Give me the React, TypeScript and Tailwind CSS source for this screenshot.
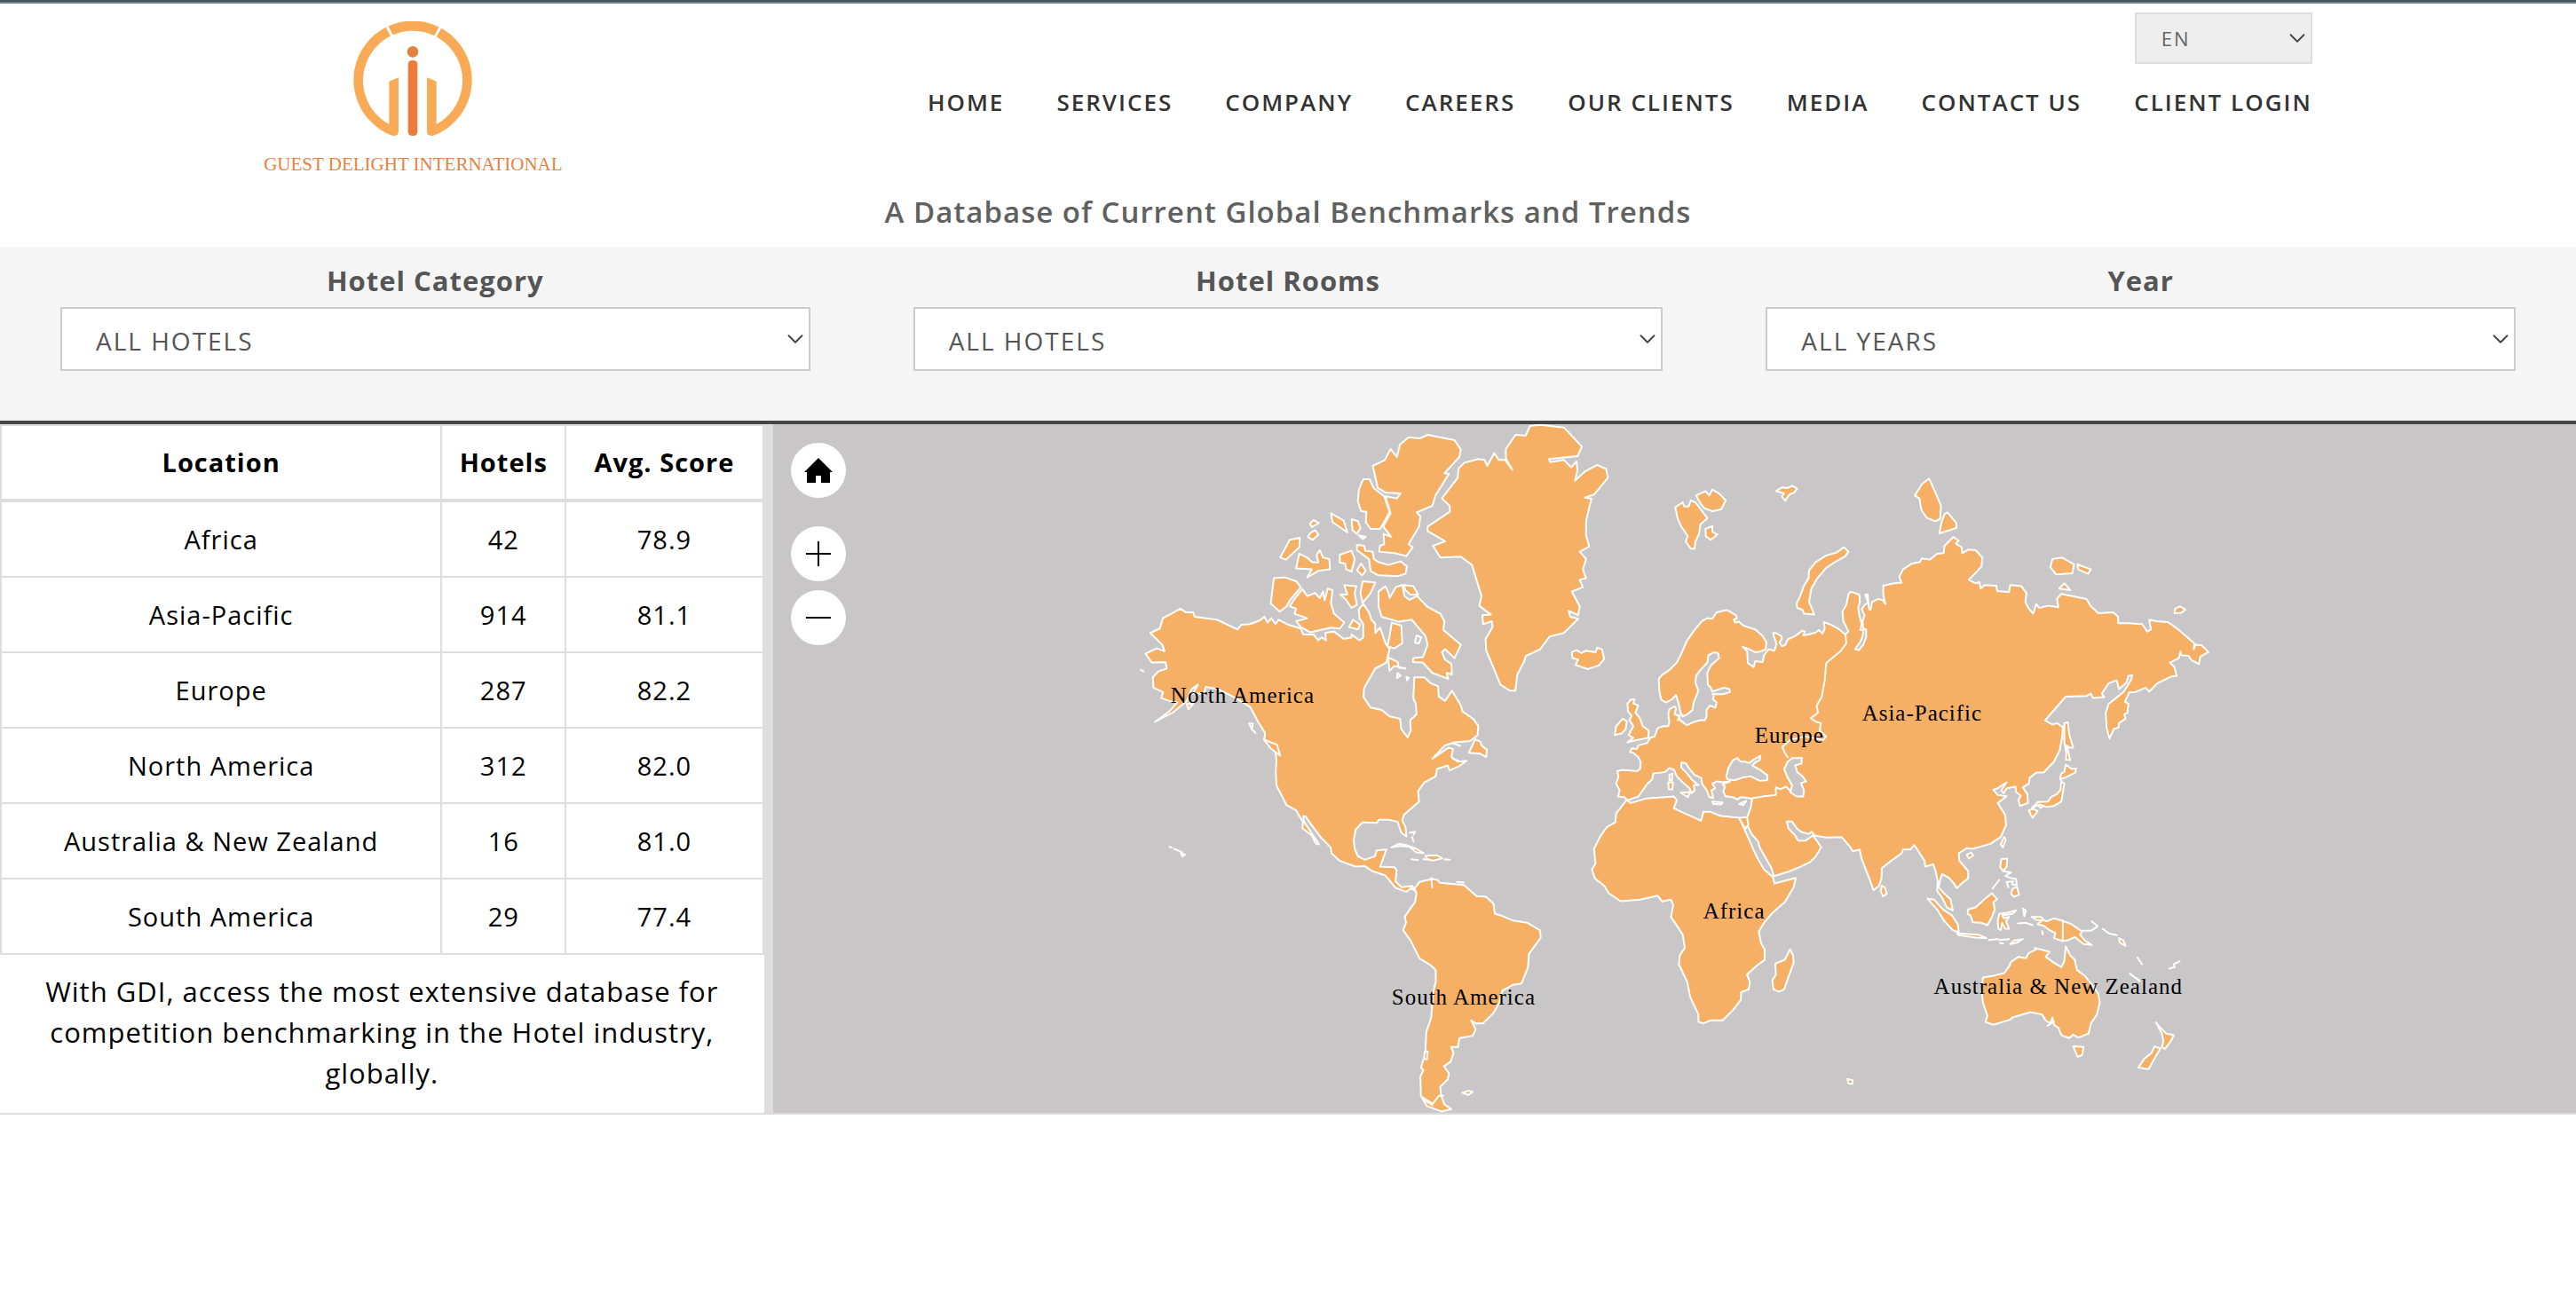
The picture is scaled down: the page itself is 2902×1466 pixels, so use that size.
import { ChevronDown } from "lucide-react";

const NAV = [
  "Home",
  "Services",
  "Company",
  "Careers",
  "Our Clients",
  "Media",
  "Contact Us",
  "Client Login",
];

const FILTERS = [
  { id: "category", label: "Hotel Category", value: "ALL HOTELS" },
  { id: "rooms", label: "Hotel Rooms", value: "ALL HOTELS" },
  { id: "year", label: "Year", value: "ALL YEARS" },
];

const ROWS = [
  { location: "Africa", hotels: "42", score: "78.9" },
  { location: "Asia-Pacific", hotels: "914", score: "81.1" },
  { location: "Europe", hotels: "287", score: "82.2" },
  { location: "North America", hotels: "312", score: "82.0" },
  { location: "Australia & New Zealand", hotels: "16", score: "81.0" },
  { location: "South America", hotels: "29", score: "77.4" },
];

const LABELS = [
  { text: "North America", x: 448, y: 314 },
  { text: "Europe", x: 1106, y: 359 },
  { text: "Asia-Pacific", x: 1227, y: 334 },
  { text: "Africa", x: 1048, y: 557 },
  { text: "South America", x: 697, y: 654 },
  { text: "Australia & New Zealand", x: 1308, y: 642 },
];

// Each region is drawn in its own units and placed on the map by `place`.
const REGIONS = [
  {
    name: "north-america",
    place: "translate(400 -8) scale(0.35714 0.33333)",
    land: [
      "M165 648 182 660 205 660 210 675 280 685 345 718 358 702 385 700 415 688 430 675 440 695 452 680 465 700 475 685 505 702 545 715 552 735 585 735 600 755 610 745 625 755 622 730 650 725 680 750 705 745 705 735 730 755 742 745 742 700 730 680 728 650 742 632 760 660 768 685 780 700 780 730 795 712 812 765 825 785 815 830 780 850 745 915 742 945 765 982 800 990 825 1012 858 1020 862 1055 882 1083 892 1060 890 1025 910 1005 908 970 900 950 903 880 935 880 955 900 978 910 980 945 1000 960 1022 925 1050 975 1055 995 1090 1022 1105 1045 1103 1075 1080 1095 1030 1100 1000 1110 960 1155 1010 1118 1025 1122 1020 1150 1040 1165 1068 1162 1045 1180 1015 1195 1008 1178 975 1190 970 1215 935 1235 915 1265 918 1300 870 1345 865 1365 875 1385 878 1418 862 1405 850 1368 825 1362 790 1362 785 1372 740 1370 718 1395 712 1430 715 1460 725 1485 747 1497 779 1485 784 1465 815 1462 804 1495 795 1520 840 1522 847 1532 844 1570 863 1590 896 1585 905 1598 891 1595 877 1605 844 1592 812 1550 770 1535 747 1518 718 1520 667 1500 642 1475 639 1455 607 1420 569 1365 560 1350 552 1350 555 1368 575 1400 603 1445 592 1442 580 1415 550 1390 552 1370 530 1330 500 1312 468 1245 466 1200 468 1160 465 1135 430 1090 432 1068 410 1030 385 980 340 950 285 920 245 912 240 935 205 935 220 905 200 920 185 960 140 1000 85 1030 130 995 155 965 130 960 105 950 110 930 80 915 78 880 95 860 122 850 118 828 75 830 55 800 90 782 115 792 108 770 70 730 100 715 110 680Z",
      "M945 60 1030 78 1050 110 1045 135 998 190 1012 192 970 265 960 300 910 322 922 335 918 370 885 430 898 440 878 470 842 460 792 455 795 435 808 430 806 395 830 405 805 370 828 325 812 268 848 275 860 258 812 255 788 240 772 165 810 145 828 108 848 135 858 92 885 68 920 72Z",
      "M742 210 762 210 775 240 808 268 825 320 810 350 795 378 765 378 750 355 752 320 735 318 725 285 728 245Z",
      "M1042 175 1060 155 1105 142 1125 145 1133 165 1155 122 1170 145 1190 145 1212 178 1192 140 1192 108 1222 60 1255 62 1268 30 1300 26 1375 35 1432 100 1418 132 1328 142 1332 152 1375 145 1398 170 1415 150 1418 180 1410 215 1440 185 1480 162 1508 175 1514 205 1470 262 1442 272 1462 275 1445 350 1445 400 1455 438 1425 455 1445 480 1435 515 1445 545 1425 550 1435 575 1400 590 1425 640 1420 670 1390 655 1395 675 1420 682 1375 730 1330 742 1300 785 1255 808 1248 830 1228 870 1222 925 1205 925 1175 905 1150 840 1130 790 1128 750 1150 710 1148 690 1120 700 1118 670 1145 668 1108 638 1115 605 1085 500 1050 472 985 475 962 435 1000 420 945 385 945 370 1015 320 1015 300 990 275 1040 205Z",
      "M1400 795 1415 788 1430 798 1445 790 1475 795 1480 780 1495 785 1502 818 1485 840 1450 852 1412 838 1420 820 1402 815Z",
      "M870 568 900 572 915 600 890 600 875 585Z",
      "M790 590 812 572 822 595 825 612 845 575 865 568 872 605 888 618 912 605 945 642 985 665 998 690 995 720 1050 770 1030 815 1000 785 990 795 1000 820 1020 835 1022 870 1005 865 1010 885 960 865 930 830 898 828 900 815 930 812 945 770 938 740 895 685 855 692 800 675 790 640Z",
      "M510 640 525 615 550 582 565 605 590 595 605 612 615 590 620 620 630 580 645 585 640 630 650 665 682 695 668 715 640 712 575 728 545 710 530 690 565 680 525 665 530 648Z",
      "M460 545 495 542 530 555 545 575 510 620 500 640 478 658 450 630Z",
      "M670 600 692 600 682 568 720 572 715 595 722 635 705 645 688 618Z",
      "M740 555 780 560 765 595 740 628 733 595Z",
      "M722 432 745 435 748 452 772 455 775 480 790 490 820 500 860 488 880 505 875 530 850 538 790 535 765 520 760 480 722 450Z",
      "M735 495 750 520 738 535 722 518Z",
      "M668 465 705 452 715 480 705 522 688 515 685 495 668 492Z",
      "M540 462 565 475 580 490 600 492 595 465 605 450 615 475 635 480 637 515 600 520 565 542 580 515 530 512Z",
      "M510 415 542 408 540 440 498 482 480 475Z",
      "M585 348 602 358 580 372 574 360Z",
      "M575 392 590 382 600 398 582 415 567 405Z",
      "M640 325 680 350 692 390 668 372 645 355Z",
      "M705 345 725 352 733 375 722 395 708 382Z",
      "M728 400 750 405 740 412Z",
      "M710 685 732 702 725 718 697 710Z",
      "M820 812 850 828 855 848 875 850 840 842 825 858Z",
      "M850 865 860 875 848 882Z",
      "M878 878 886 882 880 890Z",
      "M832 695 862 705 865 765 840 782 818 775 825 740Z",
      "M1095 1090 1112 1098 1115 1110 1132 1125 1130 1150 1110 1138 1075 1135Z",
      "M428 1090 470 1108 480 1145 450 1120Z",
      "M382 1035 394 1037 390 1055Z",
      "M185 970 205 970 190 988Z",
    ],
    seas: ["M910 738 925 745 918 765 905 762Z"],
    lines: "M390 1055 402 1068 M40 855 48 860 M1022 1102 1048 1112 M1025 1155 1042 1162",
  },
  {
    name: "central-and-south-america",
    place: "translate(400 442) scale(0.33333)",
    land: [
      "M975 260 968 245 985 222 1015 215 1030 212 1045 215 1055 225 1110 230 1135 232 1150 245 1178 270 1210 272 1235 295 1240 330 1260 335 1300 352 1350 360 1392 385 1395 410 1355 465 1352 510 1330 565 1300 570 1265 590 1255 630 1235 665 1200 700 1175 700 1160 690 1175 720 1165 742 1120 750 1115 780 1092 780 1100 800 1090 830 1068 845 1085 870 1080 890 1055 915 1058 945 1070 975 1093 990 1060 998 1010 980 990 945 988 880 998 858 990 850 1005 800 1008 730 1025 680 1030 600 1040 560 1040 520 1025 505 985 480 955 420 930 385 940 358 935 340 970 290Z",
      "M890 105 915 93 940 97 975 110 1000 125 975 122 950 103 920 100Z",
      "M1005 133 1045 132 1062 142 1030 150 1010 143Z",
      "M178 122 192 130 183 136Z",
      "M1130 935 1150 928 1165 932 1150 942Z",
      "M1003 795 1013 795 1010 822 1000 820Z",
    ],
    lines:
      "M995 950 1030 972 1050 945 1065 945 M1000 958 1028 976 M1025 208 1028 240 M1112 222 1135 224 M955 240 968 250 M140 103 147 105 M155 110 180 120 M958 145 980 148 M1070 145 1088 147 M998 145 1015 147 M952 55 970 52 965 62 M960 70 965 85",
  },
  {
    name: "eurasia",
    place: "translate(930 -8) scale(0.33333)",
    land: [
      "M98 1296 88 1285 66 1283 72 1262 60 1240 68 1215 64 1197 80 1193 130 1197 141 1190 143 1168 135 1150 118 1135 107 1133 112 1120 130 1122 135 1110 165 1102 175 1085 190 1080 200 1052 220 1045 236 1045 240 1030 236 1005 240 988 258 978 262 985 258 1005 270 1010 276 1025 290 1035 298 1042 320 1032 345 1025 360 1025 366 1010 365 990 378 975 395 983 400 965 388 955 390 940 385 936 420 937 445 930 443 920 425 915 385 928 380 915 370 905 368 865 380 840 408 815 405 798 390 795 372 805 368 830 345 855 330 875 328 900 338 925 330 945 322 965 318 990 300 1005 285 1012 278 1000 270 965 262 940 248 955 228 965 212 955 206 925 204 885 215 872 240 855 265 830 280 800 300 755 325 720 350 690 368 680 385 682 400 660 435 652 465 670 468 680 458 685 462 695 475 692 490 705 510 712 530 718 555 740 568 762 565 785 550 792 530 795 510 785 487 776 503 792 505 832 525 845 530 825 555 828 560 805 575 785 595 790 602 768 590 730 600 730 618 740 620 750 612 762 620 775 632 770 640 752 665 740 690 722 698 725 692 738 710 735 735 728 745 720 758 732 765 715 762 693 785 702 810 715 835 735 845 725 838 710 828 690 825 658 838 635 845 600 852 590 882 600 884 625 878 645 882 670 890 700 885 720 897 718 892 745 885 760 868 785 880 788 895 770 905 745 905 718 895 712 893 690 900 670 890 650 900 635 912 628 902 600 910 600 915 650 920 652 925 625 945 615 960 618 970 632 963 600 963 570 1000 562 1025 560 1017 540 1030 515 1060 495 1087 490 1093 478 1120 482 1145 462 1167 460 1170 435 1200 405 1218 418 1208 428 1228 440 1230 460 1250 448 1275 450 1298 475 1295 505 1272 530 1252 550 1275 562 1288 558 1292 580 1305 568 1345 570 1348 588 1388 592 1392 568 1430 572 1447 595 1443 625 1455 648 1470 665 1480 632 1490 645 1520 638 1555 643 1550 615 1565 598 1650 615 1665 640 1690 663 1740 660 1757 675 1757 697 1790 697 1838 700 1855 725 1868 718 1862 685 1885 690 1925 693 1960 718 2015 765 2012 785 2020 770 2040 772 2062 795 2035 810 2030 835 2005 822 1995 807 1970 805 1968 793 1962 815 1932 830 1947 845 1955 875 1935 878 1890 900 1862 928 1850 915 1815 930 1795 930 1780 962 1792 970 1788 1000 1778 1005 1782 1020 1760 1035 1758 1050 1742 1055 1728 1087 1718 1050 1715 1000 1725 970 1750 950 1775 930 1800 890 1805 873 1792 875 1785 898 1760 920 1752 890 1725 900 1702 935 1710 947 1672 950 1665 935 1650 943 1580 945 1545 985 1510 1025 1535 1040 1550 1035 1570 1048 1568 1080 1560 1125 1540 1165 1505 1202 1480 1202 1458 1220 1455 1240 1435 1252 1450 1275 1452 1305 1425 1315 1420 1295 1428 1280 1412 1268 1410 1250 1380 1255 1370 1272 1362 1262 1380 1235 1350 1255 1335 1260 1350 1278 1380 1282 1350 1305 1375 1345 1378 1380 1360 1420 1325 1443 1265 1460 1245 1458 1218 1475 1220 1500 1250 1535 1250 1560 1230 1575 1212 1593 1200 1575 1185 1558 1162 1545 1155 1565 1150 1590 1168 1610 1190 1630 1198 1668 1178 1658 1162 1625 1145 1602 1147 1570 1140 1535 1132 1512 1105 1520 1102 1500 1080 1465 1068 1447 1055 1462 1030 1462 1025 1475 990 1500 958 1525 957 1560 948 1585 930 1600 910 1545 890 1495 883 1462 860 1468 850 1452 822 1420 770 1422 730 1415 722 1402 710 1410 685 1402 670 1390 655 1368 637 1368 642 1390 665 1415 675 1432 700 1432 725 1415 740 1435 753 1455 735 1485 715 1505 680 1522 640 1538 593 1552 585 1525 565 1490 545 1455 540 1435 518 1410 507 1388 500 1372 502 1355 515 1320 520 1290 500 1287 480 1285 470 1293 455 1285 430 1282 422 1265 428 1250 420 1242 445 1232 420 1235 400 1232 385 1240 395 1255 382 1262 388 1288 375 1285 365 1260 350 1240 348 1220 325 1210 308 1190 295 1170 280 1168 280 1185 300 1205 315 1225 338 1245 322 1245 325 1262 315 1272 308 1255 285 1235 265 1215 255 1192 240 1187 225 1200 205 1203 185 1205 182 1225 165 1240 150 1262 135 1283Z",
      "M98 970 110 955 122 955 118 968 134 975 125 1000 140 1018 150 1045 170 1060 168 1085 130 1092 98 1100 118 1085 102 1075 110 1060 118 1045 105 1025 112 1010 100 995Z",
      "M55 1075 60 1045 82 1020 96 1028 92 1055 78 1070Z",
      "M260 305 285 288 290 302 305 302 312 282 328 288 368 342 345 362 340 395 328 420 325 445 312 445 295 420 302 402 280 370 267 340Z",
      "M330 265 362 250 375 265 385 245 410 260 430 282 415 312 385 318 358 308 345 292Z",
      "M362 378 385 368 385 388 402 397 380 415 363 403Z",
      "M600 250 620 238 640 240 655 232 672 242 662 255 645 262 632 283 620 268 628 258Z",
      "M670 630 680 610 695 570 710 545 712 518 735 490 770 468 805 458 830 440 845 455 835 470 800 490 770 510 740 545 720 580 712 625 730 668 695 665 690 652 672 645Z",
      "M240 1210 250 1205 248 1228 240 1228Z",
      "M236 1235 252 1235 250 1260 238 1258Z",
      "M278 1270 310 1268 302 1285Z",
      "M385 1300 420 1303 415 1310 388 1308Z",
      "M475 1308 500 1298 490 1312Z",
      "M1070 265 1095 225 1118 208 1135 245 1158 300 1155 345 1138 352 1110 340 1092 315 1085 275Z",
      "M1170 328 1180 322 1210 358 1210 375 1153 393 1160 355Z",
      "M1535 480 1568 475 1608 498 1602 528 1548 532 1528 508Z",
      "M1620 498 1665 515 1655 530 1622 515Z",
      "M1558 580 1575 562 1595 585Z",
      "M1947 663 1950 648 1965 640 1985 650 1970 662Z",
      "M1575 1035 1587 1032 1592 1075 1605 1118 1592 1118 1583 1110 1595 1160 1580 1158 1582 1135 1575 1100Z",
      "M1580 1175 1600 1190 1615 1188 1612 1202 1580 1218 1560 1225 1565 1205 1575 1200Z",
      "M1565 1230 1575 1240 1570 1270 1565 1300 1540 1315 1515 1318 1490 1310 1465 1322 1485 1302 1520 1300 1530 1285 1550 1275 1562 1260Z",
      "M1455 1330 1470 1325 1485 1332 1468 1355 1462 1345Z",
      "M1372 1420 1377 1430 1367 1455 1360 1445Z",
      "M1245 1480 1260 1472 1267 1482 1253 1493Z",
      "M1362 1495 1382 1493 1380 1520 1368 1535 1358 1522Z",
    ],
    seas: [
      "M437 1225 432 1215 440 1185 455 1160 470 1153 480 1165 495 1165 510 1170 525 1158 548 1145 545 1160 530 1168 520 1178 550 1195 572 1212 570 1228 545 1230 515 1215 490 1218 460 1228Z",
      "M628 1190 640 1165 655 1153 688 1152 686 1172 665 1178 672 1200 690 1215 702 1232 685 1238 695 1262 692 1283 670 1283 648 1268 655 1245 640 1220Z",
    ],
    lines:
      "M835 735 838 765 820 790 770 832 765 890 755 945 738 975 742 1000 718 1018 735 1030 752 1035 748 1060 770 1080 760 1092 740 1088 700 1080 650 1090 622 1115 630 1135 640 1150 M515 1290 560 1282 600 1278 600 1252 615 1258 635 1250 650 1265 M258 1005 276 1010 268 1025 M1485 1312 1495 1322 1505 1314",
  },
  {
    name: "africa",
    place: "translate(900 372) scale(0.33333)",
    land: [
      "M185 155 200 165 250 150 345 143 355 155 345 182 370 195 400 208 437 225 445 195 470 195 500 208 565 215 570 225 583 252 600 290 615 325 630 355 650 390 680 415 685 437 757 418 750 450 720 500 675 540 650 570 632 600 640 640 652 660 652 695 625 715 592 745 602 770 598 795 572 805 572 830 545 865 510 900 470 900 445 910 428 905 428 880 400 820 390 770 362 710 365 680 382 655 375 610 335 550 343 510 335 492 305 498 290 478 230 492 165 497 125 470 110 445 78 420 68 390 80 370 75 320 95 280 120 245 147 230 150 200Z",
      "M565 215 592 213 597 238 586 252Z",
      "M738 660 748 680 750 705 735 745 718 795 700 803 682 795 678 765 690 745 688 708 720 695Z",
      "M932 1098 950 1103 948 1115 935 1113Z",
    ],
    lines: "",
  },
  {
    name: "oceania",
    place: "translate(1230 422) scale(0.33333)",
    land: [
      "M400 605 440 598 472 590 490 565 495 552 520 535 545 540 555 522 580 510 575 505 625 518 612 535 640 555 665 570 675 550 680 500 695 530 710 545 718 580 745 600 765 625 790 660 795 690 785 730 765 760 757 795 722 808 705 798 692 810 665 800 655 775 640 765 635 740 628 760 612 750 600 730 560 722 500 740 490 748 435 765 408 755 415 735 400 690 395 650Z",
      "M705 838 740 840 735 868 720 873Z",
      "M985 757 1000 775 1020 795 1045 800 1035 820 1015 847 1005 840 1010 820 1005 795Z",
      "M980 838 1000 845 985 870 960 915 925 910 945 880 970 860Z",
      "M57 295 68 300 75 322 62 330 55 315Z",
      "M500 305 515 298 522 325 505 332 495 322Z",
      "M350 375 375 368 400 345 430 320 448 340 435 350 440 375 430 400 415 428 395 420 365 418 358 395 348 390Z",
      "M212 338 235 342 265 375 295 395 315 425 318 452 298 445 270 415 245 375Z",
      "M312 455 350 458 385 460 412 472 375 470 318 462Z",
      "M492 492 505 480 535 475 515 487Z",
      "M455 390 485 385 512 378 500 390 465 395 470 405 488 400 478 415 488 440 475 440 465 420 460 445 452 440 450 415Z",
      "M535 372 545 378 540 398Z",
      "M565 400 595 400 605 410 615 415 640 405 665 412 700 425 735 450 728 460 745 480 768 495 740 492 710 468 690 478 670 482 640 472 645 455 625 445 605 430 585 425 600 412 580 410Z",
      "M860 472 875 480 882 498 862 486Z",
    ],
    lines:
      "M670 412V482 M468 245 495 250 475 262 492 268 512 272 514 292 498 290 502 280 480 282 486 300 M455 275 432 305 M420 478 450 475 M455 478 488 475 M458 488 468 490 M518 422 545 420 568 428 M600 448 602 460 M738 447 765 447 788 432 768 415 M805 440 825 456 852 462 M922 538 938 560 M897 592 930 618 M900 596 926 612 M1030 575 1048 570 1045 560 1065 550 M618 768 640 755",
  },
];

function Logo() {
  return (
    <a href="#" className="flex flex-col items-center gap-[19px]">
      <svg viewBox="357 72 402 390" className="h-[130px] w-[134px]" aria-hidden="true">
        <path
          fill="#f9aa57"
          d="M510 262V445Q508 462 488 458A200 200 0 1 1 628 458Q606 462 606 445V262L638 275V420A168 168 0 1 0 478 420V275Z"
        />
        <path stroke="#fff" strokeWidth="9" d="M469 86 490 126M653 88 632 128" />
        <circle cx="558" cy="175" r="19" fill="#e2823f" />
        <rect x="542" y="204" width="32" height="255" rx="14" fill="#ec7b3a" />
      </svg>
      <span className="font-['Liberation_Serif',serif] text-[21px] leading-6 text-[#e8823f]">
        GUEST DELIGHT INTERNATIONAL
      </span>
    </a>
  );
}

function Header() {
  return (
    <header>
      <div className="mx-auto flex w-4/5 items-start justify-between px-[7px] pb-[19px]">
        <div className="pt-5">
          <Logo />
        </div>
        <div className="flex flex-col items-end gap-[25px] pt-[10px]">
          <div className="relative">
            <select
              aria-label="Language"
              className="block h-[58px] w-[200px] appearance-none border-2 border-[#ddd] bg-[#eee] pl-7 text-[22px] tracking-[2px] text-[#666]"
            >
              <option>EN</option>
            </select>
            <ChevronDown
              size={30}
              strokeWidth={1.5}
              className="pointer-events-none absolute top-[14px] right-[2px] text-[#444]"
            />
          </div>
          <nav>
            <ul className="flex gap-[59px]">
              {NAV.map((item) => (
                <li key={item}>
                  <a
                    href="#"
                    className="text-[26px] leading-9 font-semibold tracking-[2px] whitespace-nowrap text-[#333] uppercase"
                  >
                    {item}
                  </a>
                </li>
              ))}
            </ul>
          </nav>
        </div>
      </div>
      <h1 className="pb-4 text-center text-[33px] leading-[46px] font-semibold tracking-[1px] text-[#606060]">
        A Database of Current Global Benchmarks and Trends
      </h1>
    </header>
  );
}

function Filters() {
  return (
    <form className="grid grid-cols-3 border-b-4 border-[#464646] bg-[#f5f5f5] px-[10px] pt-[18px] pb-14">
      {FILTERS.map(({ id, label, value }) => (
        <div key={id} className="flex flex-col gap-[10px] px-[58px]">
          <label
            htmlFor={id}
            className="text-center text-[31px] leading-10 font-bold tracking-[1px] text-[#555]"
          >
            {label}
          </label>
          <div className="relative">
            <select
              id={id}
              className="block h-[72px] w-full appearance-none border-2 border-[#ccc] bg-white pt-1 pl-[38px] text-[28px] tracking-[2px] text-[#555]"
            >
              <option>{value}</option>
            </select>
            <ChevronDown
              size={30}
              strokeWidth={1.5}
              className="pointer-events-none absolute top-[21px] right-[2px] text-[#444]"
            />
          </div>
        </div>
      ))}
    </form>
  );
}

function ScoreTable() {
  return (
    <table className="w-full table-fixed border-collapse text-center text-[29px] tracking-[1px]">
      <thead className="leading-[42px]">
        <tr className="font-bold">
          <th className="w-[57.8%] border-2 border-b-4 border-[#ddd] py-5">Location</th>
          <th className="border-2 border-b-4 border-[#ddd] py-5">Hotels</th>
          <th className="w-[25.9%] border-2 border-b-4 border-[#ddd] py-5">Avg. Score</th>
        </tr>
      </thead>
      <tbody className="leading-[43px]">
        {ROWS.map(({ location, hotels, score }) => (
          <tr key={location}>
            <td className="border-2 border-[#ddd] py-5">{location}</td>
            <td className="border-2 border-[#ddd] py-5">{hotels}</td>
            <td className="border-2 border-[#ddd] py-5">{score}</td>
          </tr>
        ))}
      </tbody>
    </table>
  );
}

const mapButton = "flex size-[62px] items-center justify-center rounded-full bg-white";

function WorldMap() {
  return (
    <section className="relative w-[70%] bg-[#c8c6c7]">
      <svg viewBox="0 0 2032 776" className="block w-full" role="img" aria-label="World map">
        <g stroke="#fff" strokeWidth="2" strokeLinejoin="round" strokeLinecap="round">
          {REGIONS.map(({ name, place, land, seas, lines }) => (
            <g key={name} transform={place}>
              {land.map((d) => (
                <path key={d} d={d} fill="#f5b066" vectorEffect="non-scaling-stroke" />
              ))}
              {seas?.map((d) => (
                <path key={d} d={d} fill="#c8c6c7" vectorEffect="non-scaling-stroke" />
              ))}
              <path d={lines} fill="none" vectorEffect="non-scaling-stroke" />
            </g>
          ))}
        </g>
        <g className="font-['Liberation_Serif',serif] text-[25px] tracking-[1px]">
          {LABELS.map(({ text, x, y }) => (
            <text key={text} x={x} y={y}>
              {text}
            </text>
          ))}
        </g>
      </svg>
      <div className="absolute top-[21px] left-5 flex flex-col gap-8">
        <button type="button" aria-label="Home" className={mapButton}>
          <svg viewBox="0 0 32 28" className="h-7 w-8">
            <path d="M16 0 0 16H3V28H13V20H19V28H29V16H32Z" />
          </svg>
        </button>
        <div className="flex flex-col gap-[10px]">
          <button type="button" aria-label="Zoom in" className={mapButton}>
            <svg viewBox="0 0 28 28" className="size-7" stroke="#000" strokeWidth="2">
              <path d="M0 14H28M14 0V28" />
            </svg>
          </button>
          <button type="button" aria-label="Zoom out" className={mapButton}>
            <svg viewBox="0 0 28 28" className="size-7" stroke="#000" strokeWidth="2">
              <path d="M0 14H28" />
            </svg>
          </button>
        </div>
      </div>
    </section>
  );
}

export default function App() {
  return (
    <div className="min-h-screen bg-white font-['Open_Sans',sans-serif] text-black">
      <div className="h-1 border-b-2 border-[#6c7e87] bg-[#425563]" />
      <Header />
      <Filters />
      <main className="flex border-b-2 border-[#ddd]">
        <section className="w-[30%] border-r-10 border-[#dedede]">
          <ScoreTable />
          <p className="px-6 pt-[18px] pb-5 text-center text-[31px] leading-[46px] tracking-[1px]">
            With GDI, access the most extensive database for competition benchmarking in the
            Hotel industry, globally.
          </p>
        </section>
        <WorldMap />
      </main>
    </div>
  );
}
